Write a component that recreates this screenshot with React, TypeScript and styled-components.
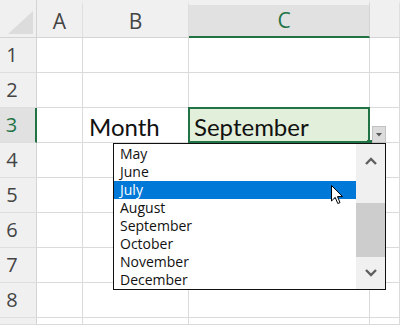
import React from "react";
import styled, { createGlobalStyle, css } from "styled-components";

const GREEN = "#217346";

const GlobalStyle = createGlobalStyle`
  html, body { margin: 0; padding: 0; background: #ffffff; }
  * { box-sizing: border-box; }
`;

const Sheet = styled.div`
  position: relative;
  width: 400px;
  height: 325px;
  overflow: hidden;
  display: grid;
  grid-template-columns: 37px 46px 106px 181px 1fr;
  grid-template-rows: 38px repeat(8, 35px) 1fr;
  background: #ffffff;
`;

const Corner = styled.div`
  background: #f0f0f0;
  border-right: 1px solid #d4d4d4;
  border-bottom: 1px solid #d4d4d4;
  display: flex;
  align-items: flex-end;
  justify-content: flex-end;
  padding: 0 3px 3px 0;
`;

const CornerTriangle = styled.div`
  width: 25px;
  height: 23px;
  background: #dcdcdc;
  clip-path: polygon(100% 0, 100% 100%, 0 100%);
`;

const ColHeader = styled.div<{ $selected?: boolean }>`
  background: ${(p) => (p.$selected ? "#e1e1e1" : "#f0f0f0")};
  border-top: 5px solid #f0f0f0;
  border-right: 1px solid ${(p) => (p.$selected ? "#d4d4d4" : "#dedede")};
  border-bottom: ${(p) => (p.$selected ? `2px solid ${GREEN}` : "1px solid #d4d4d4")};
  color: ${(p) => (p.$selected ? GREEN : "#444444")};
  font-family: "Open Sans", "Noto Sans", sans-serif;
  font-size: 21px;
  line-height: 1;
  display: flex;
  align-items: center;
  justify-content: center;
  padding-left: ${(p) => (p.$selected ? "10px" : "0")};
`;

const RowHeader = styled.div<{ $selected?: boolean }>`
  background: ${(p) => (p.$selected ? "#e1e1e1" : "#f0f0f0")};
  border-right: ${(p) => (p.$selected ? `2px solid ${GREEN}` : "1px solid #d4d4d4")};
  border-bottom: 1px solid #dedede;
  color: ${(p) => (p.$selected ? GREEN : "#444444")};
  font-family: "Open Sans", "Noto Sans", sans-serif;
  font-size: 20px;
  line-height: 1;
  display: flex;
  align-items: center;
  justify-content: center;
  padding-right: 12px;
`;

const Cell = styled.div<{ $active?: boolean }>`
  position: relative;
  border-right: 1px solid #dadada;
  border-bottom: 1px solid #dadada;
  font-family: Lato, "Liberation Sans", sans-serif;
  font-size: 24px;
  color: #111111;
  display: flex;
  align-items: center;
  padding: 2px 0 0 6px;
  white-space: nowrap;
  ${(p) =>
    p.$active &&
    css`
      background: #e2efda;
      padding-left: 5px;
      &::after {
        content: "";
        position: absolute;
        left: -1px;
        top: -1px;
        right: -1px;
        bottom: -1px;
        border: 2px solid ${GREEN};
      }
      &::before {
        content: "";
        position: absolute;
        right: -3px;
        bottom: -3px;
        width: 5px;
        height: 5px;
        background: ${GREEN};
        z-index: 1;
      }
    `}
`;

const DropButton = styled.div`
  position: absolute;
  left: 372px;
  top: 126px;
  width: 14px;
  height: 17px;
  background: #dcdcdc;
  border: 1px solid #c2c2c2;
  display: flex;
  align-items: center;
  justify-content: center;
`;

const DropTriangle = styled.div`
  width: 7px;
  height: 4px;
  background: #5a5a5a;
  clip-path: polygon(0 0, 100% 0, 50% 100%);
`;

const ListBox = styled.div`
  position: absolute;
  left: 113px;
  top: 143px;
  width: 273px;
  height: 147px;
  border: 1px solid #111111;
  background: #ffffff;
  display: flex;
  z-index: 2;
`;

const Items = styled.div`
  flex: 1;
  display: flex;
  flex-direction: column;
  padding-top: 1px;
`;

const Item = styled.div<{ $highlight?: boolean }>`
  height: 18px;
  line-height: 18px;
  padding-left: 6px;
  font-family: "Open Sans", "Noto Sans", sans-serif;
  font-size: 14px;
  color: ${(p) => (p.$highlight ? "#ffffff" : "#111111")};
  background: ${(p) => (p.$highlight ? "#0078d7" : "transparent")};
  white-space: nowrap;
`;

const ScrollBar = styled.div`
  width: 29px;
  background: #f0f0f0;
  display: flex;
  flex-direction: column;
`;

const ScrollButton = styled.div<{ $h: number }>`
  height: ${(p) => p.$h}px;
  display: flex;
  align-items: center;
  justify-content: center;
`;

const Track = styled.div`
  flex: 1;
  display: flex;
  flex-direction: column;
  justify-content: flex-end;
`;

const Thumb = styled.div`
  height: 54px;
  background: #cdcdcd;
`;

const Cursor = styled.svg`
  position: absolute;
  left: 331px;
  top: 185px;
  z-index: 3;
`;

const Chevron = ({ up }: { up?: boolean }) => (
  <svg width="12" height="8" viewBox="0 0 12 8">
    <path
      d={up ? "M1 7 L6 2 L11 7" : "M1 1 L6 6 L11 1"}
      fill="none"
      stroke="#606060"
      strokeWidth="2.4"
    />
  </svg>
);

const months = ["May", "June", "July", "August", "September", "October", "November", "December"];

export default function App() {
  const rows = [1, 2, 3, 4, 5, 6, 7, 8, 9];
  return (
    <>
      <GlobalStyle />
      <Sheet>
        <Corner>
          <CornerTriangle />
        </Corner>
        <ColHeader>A</ColHeader>
        <ColHeader>B</ColHeader>
        <ColHeader $selected>C</ColHeader>
        <ColHeader />
        {rows.map((r) => (
          <React.Fragment key={r}>
            <RowHeader $selected={r === 3}>{r < 9 ? r : ""}</RowHeader>
            <Cell />
            <Cell>{r === 3 ? "Month" : ""}</Cell>
            <Cell $active={r === 3}>{r === 3 ? "September" : ""}</Cell>
            <Cell />
          </React.Fragment>
        ))}
        <DropButton>
          <DropTriangle />
        </DropButton>
        <ListBox>
          <Items>
            {months.map((m) => (
              <Item key={m} $highlight={m === "July"}>
                {m}
              </Item>
            ))}
          </Items>
          <ScrollBar>
            <ScrollButton $h={34}>
              <Chevron up />
            </ScrollButton>
            <Track>
              <Thumb />
            </Track>
            <ScrollButton $h={32}>
              <Chevron />
            </ScrollButton>
          </ScrollBar>
        </ListBox>
        <Cursor width="13" height="20" viewBox="0 0 13 20">
          <path
            d="M0.5 0.5 L0.5 16 L4.2 12.4 L6.8 18.5 L9 17.6 L6.5 11.6 L11.5 11.6 Z"
            fill="#ffffff"
            stroke="#000000"
            strokeWidth="1"
          />
        </Cursor>
      </Sheet>
    </>
  );
}
